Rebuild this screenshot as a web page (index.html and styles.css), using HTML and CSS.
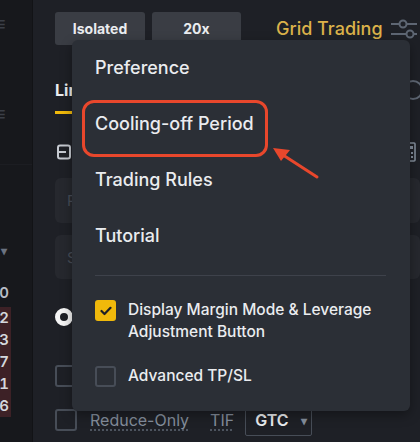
FILE: index.html
```html
<!DOCTYPE html>
<html lang="en">
<head>
<meta charset="utf-8">
<title>Futures order panel</title>
<link rel="stylesheet" href="styles.css">
</head>
<body>
<div class="screen">
  <aside class="book">
    <div class="book-head">
      <span class="book-glyph">≡</span>
      <span class="book-glyph second">≡</span>
    </div>
    <div class="book-step">▾</div>
    <div class="book-rows">
      <div class="book-last">27,480</div>
      <div class="book-row">27,482</div>
      <div class="book-row">27,483</div>
      <div class="book-row">27,487</div>
      <div class="book-row">27,491</div>
      <div class="book-row">27,496</div>
    </div>
  </aside>

  <main class="panel">
    <div class="topbar">
      <button class="mode-btn">Isolated</button>
      <button class="mode-btn">20x</button>
      <span class="grid-link">Grid Trading</span>
      <svg class="filter-icon" width="26" height="20" viewBox="0 0 26 20">
        <line x1="0" y1="5" x2="26" y2="5" stroke="#5e6673" stroke-width="2"/>
        <circle cx="12" cy="5" r="3.5" fill="#1e2026" stroke="#5e6673" stroke-width="2"/>
        <line x1="0" y1="15" x2="26" y2="15" stroke="#5e6673" stroke-width="2"/>
        <circle cx="19" cy="15" r="3.5" fill="#1e2026" stroke="#5e6673" stroke-width="2"/>
      </svg>
    </div>

    <div class="tabs">
      <div class="tab active">
        <span class="tab-label">Limit</span>
        <span class="tab-bar"></span>
      </div>
      <span class="info-ring"></span>
    </div>

    <div class="balance-row">
      <svg class="wallet-icon" width="14" height="16" viewBox="0 0 14 16">
        <rect x="1" y="1.5" width="12" height="13" rx="2" fill="none" stroke="#c6cad1" stroke-width="2"/>
        <line x1="1" y1="8" x2="9" y2="8" stroke="#c6cad1" stroke-width="2"/>
      </svg>
      <svg class="calc-icon" width="12" height="20" viewBox="0 0 12 20">
        <rect x="1" y="1" width="10" height="18" rx="1" fill="none" stroke="#848e9c" stroke-width="1.6"/>
        <rect x="3" y="4" width="6" height="3" fill="#848e9c"/>
        <rect x="3" y="10" width="2" height="2" fill="#848e9c"/>
        <rect x="7" y="10" width="2" height="2" fill="#848e9c"/>
        <rect x="3" y="14" width="2" height="2" fill="#848e9c"/>
        <rect x="7" y="14" width="2" height="2" fill="#848e9c"/>
      </svg>
    </div>

    <div class="field first"><span class="field-label">P</span></div>
    <div class="field"><span class="field-label">S</span></div>

    <div class="slider-row"><span class="knob"></span></div>

    <div class="check-row first"><span class="box"></span></div>
    <div class="check-row">
      <span class="box"></span>
      <span class="check-text dotted">Reduce-Only</span>
      <span class="tif dotted">TIF</span>
      <span class="tif-select">GTC <span class="caret">▾</span></span>
    </div>
  </main>

  <div class="menu">
    <div class="menu-item">Preference</div>
    <div class="menu-item">Cooling-off Period</div>
    <div class="menu-item">Trading Rules</div>
    <div class="menu-item">Tutorial</div>
    <div class="menu-divider"></div>
    <label class="menu-check">
      <span class="menu-box checked">
        <svg width="12" height="10" viewBox="0 0 12 10"><path d="M1.5 5 L4.5 8 L10.5 1.8" fill="none" stroke="#1e2026" stroke-width="2.2" stroke-linecap="round" stroke-linejoin="round"/></svg>
      </span>
      <span class="menu-check-text">Display Margin Mode &amp; Leverage Adjustment Button</span>
    </label>
    <label class="menu-check second">
      <span class="menu-box"></span>
      <span class="menu-check-text">Advanced TP/SL</span>
    </label>

    <span class="callout"></span>
    <svg class="callout-arrow" width="50" height="34" viewBox="0 0 50 34">
      <line x1="46" y1="31" x2="12" y2="9" stroke="#e8472c" stroke-width="3" stroke-linecap="round"/>
      <path d="M2 2 L19 4 L10 15 Z" fill="#e8472c"/>
    </svg>
  </div>
</div>
</body>
</html>
```

FILE: styles.css
```css
* {
  box-sizing: border-box;
}

html,
body {
  margin: 0;
  padding: 0;
}

body {
  background: #1e2026;
  font-family: "Inter", "Noto Sans", sans-serif;
  color: #eaecef;
}

.screen {
  position: relative;
  width: 420px;
  height: 442px;
  overflow: hidden;
  display: flex;
}

/* order book column, only its right edge shows */
.book {
  width: 33px;
  flex: none;
  background: #17181c;
  border-right: 1px solid #121316;
  display: flex;
  flex-direction: column;
  font-size: 15px;
  font-weight: 600;
  font-variant-numeric: tabular-nums;
}

.book-head {
  height: 165px;
  display: flex;
  flex-direction: column;
  align-items: flex-start;
  padding-top: 14px;
  border-bottom: 1px solid #1c1d22;
  overflow: hidden;
}

.book-glyph {
  color: #3b3f47;
  margin-left: -6px;
  font-size: 20px;
  line-height: 20px;
}

.book-glyph.second {
  margin-top: 70px;
}

.book-step {
  margin-top: 78px;
  margin-left: 1px;
  color: #6b7280;
  font-size: 12px;
  height: 16px;
  line-height: 16px;
}

.book-rows {
  margin-top: 22px;
  display: flex;
  flex-direction: column;
}

.book-row,
.book-last {
  height: 22px;
  line-height: 22px;
  white-space: nowrap;
  overflow: hidden;
  direction: rtl;
  text-align: right;
}

.book-last {
  width: 9px;
  color: #b7bdc6;
  height: 26px;
  line-height: 24px;
}

.book-row {
  color: #d4d7dc;
  width: 33px;
  padding-right: 24px;
  background: linear-gradient(90deg, #3d2126 0 11px, transparent 11px);
}

.book-row:first-of-type {
  height: 27px;
  line-height: 32px;
}

/* main trade form */
.panel {
  flex: 1;
  min-width: 0;
  padding-left: 22px;
  display: flex;
  flex-direction: column;
}

.topbar {
  margin-top: 12px;
  height: 33px;
  display: flex;
  align-items: center;
}

.mode-btn {
  width: 90px;
  height: 33px;
  border: 0;
  border-radius: 3px;
  background: #3a3d44;
  color: #eaecef;
  font-family: inherit;
  font-size: 14px;
  font-weight: 700;
  padding: 0;
}

.mode-btn + .mode-btn {
  margin-left: 7px;
  width: 89px;
}

.grid-link {
  margin-left: 35px;
  color: #dcb24a;
  font-size: 18px;
  font-weight: 500;
  white-space: nowrap;
}

.filter-icon {
  margin-left: 8px;
  flex: none;
}

.tabs {
  margin-top: 35px;
  display: flex;
  justify-content: space-between;
  align-items: flex-start;
}

.tab {
  display: flex;
  flex-direction: column;
}

.tab-label {
  font-size: 16px;
  font-weight: 700;
  line-height: 20px;
  color: #eaecef;
}

.tab-bar {
  margin-top: 11px;
  width: 17px;
  height: 3px;
  background: #f0b90b;
}

.info-ring {
  width: 20px;
  height: 20px;
  margin-right: -3px;
  border: 2px solid #5e6673;
  border-radius: 50%;
}

.balance-row {
  margin-top: 28px;
  height: 20px;
  display: flex;
  justify-content: space-between;
  align-items: center;
  padding-right: 4px;
}

.wallet-icon {
  margin-left: 2px;
}

.field {
  height: 45px;
  border-radius: 6px;
  background: #26282e;
  display: flex;
  align-items: center;
  padding-left: 12px;
}

.field.first {
  margin-top: 16px;
}

.field + .field {
  margin-top: 12px;
  height: 44px;
}

.field-label {
  color: #474d57;
  font-size: 15px;
}

.slider-row {
  margin-top: 29px;
  height: 18px;
  display: flex;
}

.knob {
  width: 18px;
  height: 18px;
  border-radius: 50%;
  border: 5px solid #f5f5f5;
  background: #1e2026;
}

.check-row {
  display: flex;
  align-items: center;
  height: 22px;
  margin-top: 22px;
}

.check-row.first {
  margin-top: 39px;
}

.box {
  width: 22px;
  height: 22px;
  flex: none;
  border: 2px solid #474d57;
  border-radius: 3px;
}

.check-text {
  margin-left: 13px;
  color: #848e9c;
  font-size: 16px;
}

.dotted {
  text-decoration: underline dotted #5e6673;
  text-underline-offset: 4px;
}

.tif {
  margin-left: 21px;
  color: #848e9c;
  font-size: 16px;
}

.tif-select {
  margin-left: 11px;
  width: 67px;
  height: 31px;
  border: 1px solid #474d57;
  border-radius: 2px;
  display: flex;
  align-items: center;
  padding-left: 9px;
  font-size: 16px;
  font-weight: 600;
  color: #eaecef;
}

.caret {
  margin-left: 12px;
  color: #848e9c;
  font-size: 12px;
}

/* settings dropdown */
.menu {
  position: absolute;
  left: 72px;
  top: 40px;
  width: 338px;
  height: 371px;
  background: #2b2f36;
  border-radius: 6px;
  box-shadow: 0 4px 12px rgba(0, 0, 0, 0.35);
  padding-left: 23px;
  padding-right: 24px;
  display: flex;
  flex-direction: column;
}

.menu-item {
  height: 56px;
  line-height: 56px;
  font-size: 18px;
  font-weight: 500;
  color: #eaecef;
}

.menu-divider {
  margin-top: 11px;
  height: 1px;
  background: #3e424b;
}

.menu-check {
  display: flex;
  align-items: flex-start;
  margin-top: 24px;
}

.menu-check.second {
  margin-top: 23px;
}

.menu-box {
  width: 21px;
  height: 21px;
  flex: none;
  border: 2px solid #474d57;
  border-radius: 3px;
  display: flex;
  align-items: center;
  justify-content: center;
}

.menu-box.checked {
  background: #f0b90b;
  border-color: #f0b90b;
}

.menu-check-text {
  margin-left: 12px;
  font-size: 15.5px;
  line-height: 22px;
  margin-top: -1px;
  color: #eaecef;
  font-weight: 500;
}

.callout {
  position: absolute;
  left: 10px;
  top: 60px;
  width: 186px;
  height: 57px;
  border: 3px solid #e8472c;
  border-radius: 12px;
}

.callout-arrow {
  position: absolute;
  left: 199px;
  top: 106px;
}
```
